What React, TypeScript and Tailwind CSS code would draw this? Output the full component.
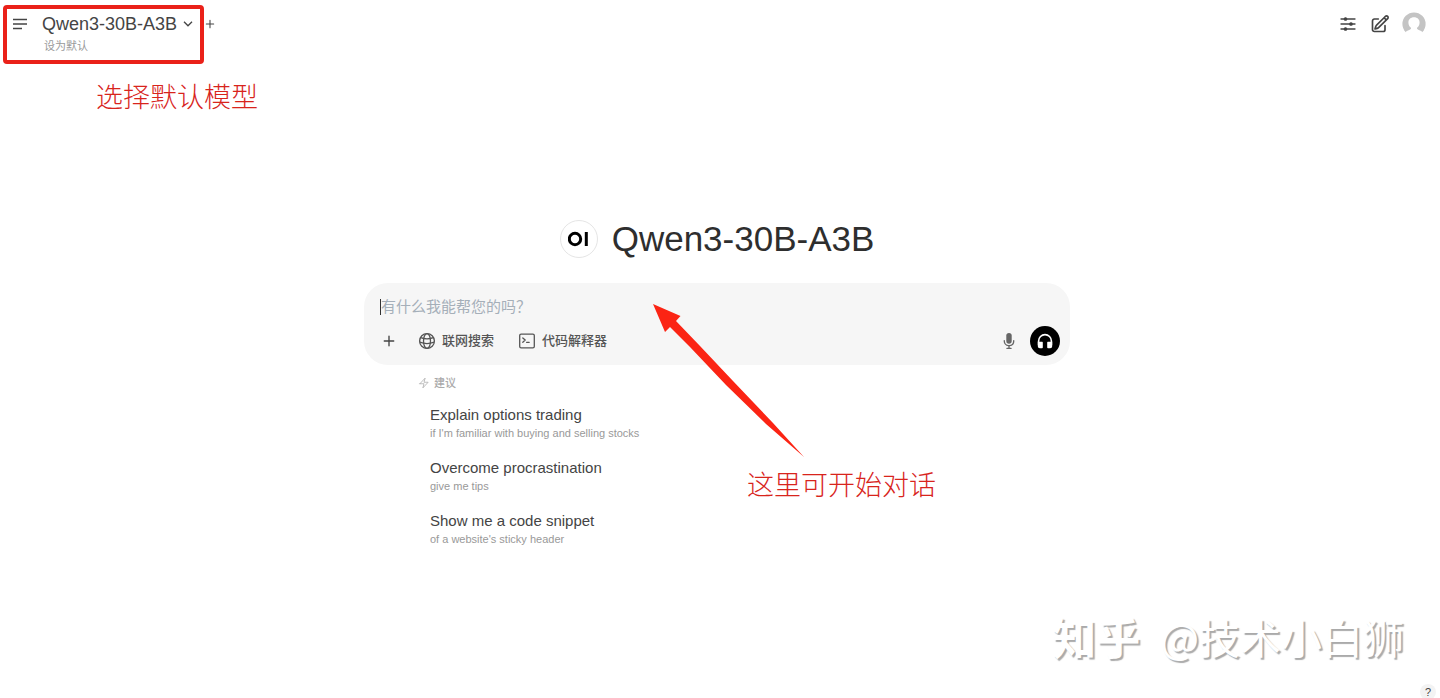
import type { ReactNode } from 'react'
import { HiOutlineBolt, HiOutlinePencilSquare } from 'react-icons/hi2'

const MODEL = 'Qwen3-30B-A3B'

const suggestions = [
  { title: 'Explain options trading', subtitle: "if I'm familiar with buying and selling stocks" },
  { title: 'Overcome procrastination', subtitle: 'give me tips' },
  { title: 'Show me a code snippet', subtitle: "of a website's sticky header" },
]

function PlusIcon({ className }: { className: string }) {
  return (
    <svg viewBox="0 0 20 20" fill="currentColor" className={className} aria-hidden="true">
      <path d="M10.75 4.75a.75.75 0 0 0-1.5 0v4.5h-4.5a.75.75 0 0 0 0 1.5h4.5v4.5a.75.75 0 0 0 1.5 0v-4.5h4.5a.75.75 0 0 0 0-1.5h-4.5v-4.5Z" />
    </svg>
  )
}

function MicIcon() {
  return (
    <svg viewBox="0 0 20 20" fill="currentColor" className="size-[18px]" aria-hidden="true">
      <path d="M7 4a3 3 0 0 1 6 0v6a3 3 0 1 1-6 0V4Z" />
      <path d="M5.5 9.643a.75.75 0 0 0-1.5 0V10c0 3.06 2.29 5.585 5.25 5.954V17.5h-1.5a.75.75 0 0 0 0 1.5h4.5a.75.75 0 0 0 0-1.5h-1.5v-1.546A6.001 6.001 0 0 0 16 10v-.357a.75.75 0 0 0-1.5 0V10a4.5 4.5 0 0 1-9 0v-.357Z" />
    </svg>
  )
}

function HeadphoneIcon() {
  return (
    <svg viewBox="0 0 16 16" fill="none" className="size-4" aria-hidden="true">
      <path d="M1.6 12V8a6.4 6.4 0 0 1 12.8 0v4" stroke="currentColor" strokeWidth="1.6" />
      <path
        d="M.8 8.8h4.4a.6.6 0 0 1 .6.6v5a.8.8 0 0 1-.8.8H2.8a2 2 0 0 1-2-2V8.8Zm14.4 0h-4.4a.6.6 0 0 0-.6.6v5c0 .4.4.8.8.8h2.2a2 2 0 0 0 2-2V8.8Z"
        fill="currentColor"
      />
    </svg>
  )
}

function SlidersIcon() {
  return (
    <svg viewBox="0 0 20 20" stroke="currentColor" strokeWidth="1.3" strokeLinecap="round" className="size-5" aria-hidden="true">
      <path d="M3 5h14M3 10h14M3 15h14" />
      <circle cx="7.5" cy="5" r="1.2" fill="currentColor" />
      <circle cx="13" cy="10" r="1.2" fill="currentColor" />
      <circle cx="7.5" cy="15" r="1.2" fill="currentColor" />
    </svg>
  )
}

function GlobeIcon() {
  return (
    <svg viewBox="0 0 18 18" fill="none" stroke="currentColor" strokeWidth="1.3" className="size-[18px]" aria-hidden="true">
      <circle cx="9" cy="9" r="7.4" />
      <ellipse cx="9" cy="9" rx="3.5" ry="7.4" />
      <path d="M2.6 5.6c3.8 1.4 9 1.4 12.8 0M1.8 10.2c4.4 1.7 10 1.7 14.4 0" />
    </svg>
  )
}

function TerminalIcon() {
  return (
    <svg
      viewBox="0 0 18 18"
      fill="none"
      stroke="currentColor"
      strokeWidth="1.3"
      strokeLinecap="round"
      strokeLinejoin="round"
      className="size-[18px]"
      aria-hidden="true"
    >
      <rect x="1.7" y="2.2" width="14.6" height="13.6" rx="1.4" />
      <path d="m4.8 6 2.4 2.1-2.4 2.1M8.6 10.3h2.6" />
    </svg>
  )
}

function Avatar() {
  return (
    <svg viewBox="0 0 24 24" className="size-6" aria-hidden="true">
      <circle cx="12" cy="12" r="11.6" fill="#c4c4c4" />
      <path
        d="M12 5.2c-3.4 0-5.6 2.2-5.6 5.2 0 2.5 1.2 4.3 2.6 5.3.2 1.3-.6 2-3.600 3-1.300.5-1.900 1.400-2.400 2.500V24h18v-2.800c-.5-1.100-1.100-2-2.400-2.500-3-1-3.800-1.700-3.600-3 1.400-1 2.600-2.800 2.600-5.300 0-3-2.200-5.200-5.600-5.200Z"
        fill="#fff"
      />
    </svg>
  )
}

function Arrow() {
  return (
    <svg viewBox="0 0 151 153" className="absolute left-[289px] top-[21px] h-[153px] w-[151px]" aria-hidden="true">
      <path
        d="M0 0 27.5 12 23 17 47 42 80 77 120 119 151 153 113 120 73 81 37 43 17 23 12 28Z"
        fill="#fb2414"
      />
    </svg>
  )
}

function ToolButton({ icon, children }: { icon: ReactNode; children: ReactNode }) {
  return (
    <button type="button" className="flex items-center gap-1.5 text-[13px] font-medium text-[#555]">
      {icon}
      {children}
    </button>
  )
}

export default function App() {
  return (
    <div className="relative flex min-h-screen flex-col overflow-hidden bg-white font-['Liberation_Sans','Noto_Sans_CJK_SC',sans-serif] text-[#444]">
      <header className="flex items-start justify-between pr-3.5">
        <div className="relative flex items-start pl-3 pt-3">
          <button type="button" aria-label="切换侧边栏" className="flex h-6 items-center">
            <svg viewBox="0 0 16 12" stroke="currentColor" strokeWidth="1.4" className="h-3 w-4" aria-hidden="true">
              <path d="M1 1.5h14M1 6h14M1 10.5h9" />
            </svg>
          </button>
          <div className="ml-3.5">
            <div className="flex h-6 items-center">
              <button type="button" className="flex items-center gap-1.5 text-lg leading-6">
                {MODEL}
                <svg viewBox="0 0 10 6" fill="none" stroke="currentColor" strokeWidth="1.3" className="h-1.5 w-2.5" aria-hidden="true">
                  <path d="m1 .8 4 4 4-4" />
                </svg>
              </button>
              <button type="button" aria-label="添加模型" className="ml-2.5">
                <PlusIcon className="size-3.5" />
              </button>
            </div>
            <button type="button" className="ml-0.5 block text-[11px] leading-5 text-[#999]">
              设为默认
            </button>
          </div>
          <div className="absolute left-[3px] top-[5px] h-[59px] w-[201px] rounded-sm border-4 border-[#ea2119]" />
          <p className="absolute left-24 top-[82px] whitespace-nowrap text-[27px] font-light leading-8 text-[#d8241c]">
            选择默认模型
          </p>
        </div>

        <div className="flex items-center gap-3 pt-3">
          <button type="button" aria-label="对话设置">
            <SlidersIcon />
          </button>
          <button type="button" aria-label="新对话">
            <HiOutlinePencilSquare strokeWidth={2} className="size-5" />
          </button>
          <button type="button" aria-label="用户菜单">
            <Avatar />
          </button>
        </div>
      </header>

      <main className="flex flex-1 flex-col items-center pr-1.5 pt-[163px]">
        <div className="flex items-center gap-3.5">
          <div className="flex size-[38px] items-center justify-center rounded-full border border-[#e5e5e5]">
            <svg viewBox="0 0 22 16" fill="none" stroke="#000" strokeWidth="3" className="h-4 w-[22px]" aria-hidden="true">
              <circle cx="7" cy="8" r="5.7" />
              <path d="M18.3 1v14" />
            </svg>
          </div>
          <h1 className="text-[35px] leading-10 text-[#2e2e2e]">{MODEL}</h1>
        </div>

        <div className="relative mt-6 w-full max-w-[706px]">
          <form className="rounded-3xl bg-[#f6f6f6] px-4 pb-2 pt-3">
            <div className="flex h-6 items-center">
              <span className="h-4 w-px bg-[#333]" />
              <input
                type="text"
                aria-label="消息"
                placeholder="有什么我能帮您的吗？"
                className="w-full bg-transparent text-[15px] leading-6 outline-none placeholder:text-[#a5afb9]"
              />
            </div>
            <div className="mt-1.5 flex h-8 items-center justify-between">
              <div className="flex items-center">
                <button type="button" aria-label="添加附件">
                  <PlusIcon className="size-[18px]" />
                </button>
                <div className="ml-5 flex items-center gap-6">
                  <ToolButton icon={<GlobeIcon />}>联网搜索</ToolButton>
                  <ToolButton icon={<TerminalIcon />}>代码解释器</ToolButton>
                </div>
              </div>
              <div className="-mr-1.5 flex items-center gap-3">
                <button type="button" aria-label="语音输入" className="text-[#666]">
                  <MicIcon />
                </button>
                <button
                  type="button"
                  aria-label="语音通话"
                  className="flex size-[30px] items-center justify-center rounded-full bg-black text-white"
                >
                  <HeadphoneIcon />
                </button>
              </div>
            </div>
          </form>

          <section className="pl-[54px] pt-2">
            <h2 className="flex items-center gap-1 text-[11px] font-medium leading-5 text-[#aaa]">
              <HiOutlineBolt className="size-3" />
              建议
            </h2>
            <ul className="pl-3 pt-3">
              {suggestions.map((item) => (
                <li key={item.title} className="h-[53px]">
                  <button type="button" className="block text-left">
                    <span className="block text-[15px] leading-5">{item.title}</span>
                    <span className="block text-[11px] leading-4 text-[#999]">{item.subtitle}</span>
                  </button>
                </li>
              ))}
            </ul>
          </section>

          <Arrow />
          <p className="absolute left-[383px] top-[187px] whitespace-nowrap text-[27px] font-light leading-8 text-[#d8241c]">
            这里可开始对话
          </p>
        </div>
      </main>

      <p className="absolute bottom-8 right-9 flex items-center gap-5 font-['Noto_Sans_CJK_SC',sans-serif] text-[41px] leading-[60px] text-white [text-shadow:2px_2px_1px_#aaa]">
        <span className="text-[44px] font-bold">知乎</span>
        <span>@技术小白狮</span>
      </p>
      <button
        type="button"
        aria-label="帮助"
        className="absolute -bottom-0.5 right-1 flex size-4 items-center justify-center rounded-full bg-[#f3f3f3] text-[11px] leading-4"
      >
        ?
      </button>
    </div>
  )
}
